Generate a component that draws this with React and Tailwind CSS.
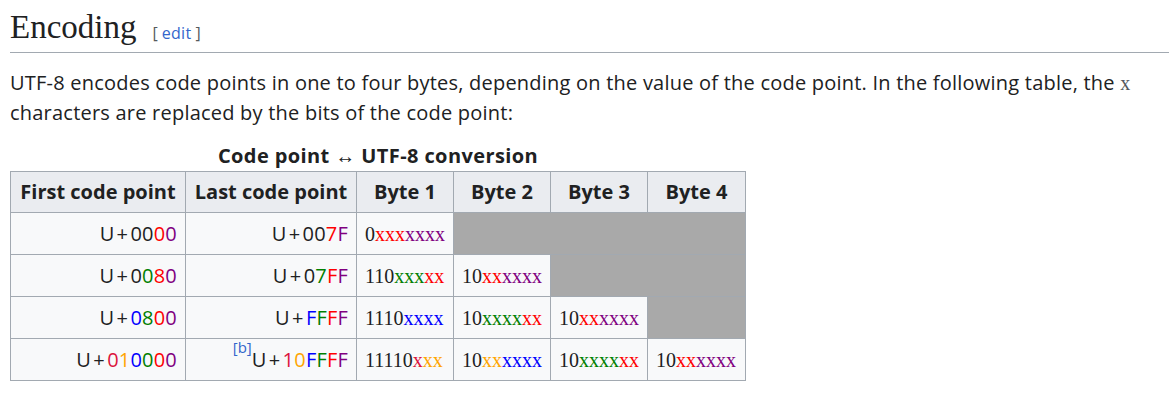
import React from 'react';

const C = {
  k: 'text-[#202122]',
  r: 'text-[#ff0000]',
  p: 'text-[#800080]',
  g: 'text-[#008000]',
  b: 'text-[#0000ff]',
  o: 'text-[#ffa500]',
  c: 'text-[#dc143c]',
};

// each cell is a list of [colorKey, text]
const rows = [
  {
    first: [['k', 'U+00'], ['r', '0'], ['p', '0']],
    last: [['k', 'U+00'], ['r', '7'], ['p', 'F']],
    bytes: [[['k', '0'], ['r', 'xxx'], ['p', 'xxxx']]],
  },
  {
    first: [['k', 'U+0'], ['g', '0'], ['r', '8'], ['p', '0']],
    last: [['k', 'U+0'], ['g', '7'], ['r', 'F'], ['p', 'F']],
    bytes: [
      [['k', '110'], ['g', 'xxx'], ['r', 'xx']],
      [['k', '10'], ['r', 'xx'], ['p', 'xxxx']],
    ],
  },
  {
    first: [['k', 'U+'], ['b', '0'], ['g', '8'], ['r', '0'], ['p', '0']],
    last: [['k', 'U+'], ['b', 'F'], ['g', 'F'], ['r', 'F'], ['p', 'F']],
    bytes: [
      [['k', '1110'], ['b', 'xxxx']],
      [['k', '10'], ['g', 'xxxx'], ['r', 'xx']],
      [['k', '10'], ['r', 'xx'], ['p', 'xxxx']],
    ],
  },
  {
    first: [['k', 'U+'], ['c', '0'], ['o', '1'], ['b', '0'], ['g', '0'], ['r', '0'], ['p', '0']],
    last: [['k', 'U+'], ['c', '1'], ['o', '0'], ['b', 'F'], ['g', 'F'], ['r', 'F'], ['p', 'F']],
    note: true,
    bytes: [
      [['k', '11110'], ['c', 'x'], ['o', 'xx']],
      [['k', '10'], ['o', 'xx'], ['b', 'xxxx']],
      [['k', '10'], ['g', 'xxxx'], ['r', 'xx']],
      [['k', '10'], ['r', 'xx'], ['p', 'xxxx']],
    ],
  },
];

const Parts = ({ parts }) =>
  parts.map(([key, text], i) => (
    <span key={i} className={C[key]}>
      {text.replace('U+', 'U\u200a+\u200a')}
    </span>
  ));

const cell = 'border border-[#a2a9b1] px-[8px] h-[42px] whitespace-nowrap';
const head = 'border border-[#a2a9b1] px-[6px] font-bold whitespace-nowrap tracking-normal';

export default function App() {
  return (
    <div className="bg-white w-[1169px] h-[394px] overflow-hidden pl-[10px] text-[#202122] font-['Open_Sans',sans-serif]">
      <div className="flex items-end border-b border-[#a2a9b1] h-[53px] pb-[8px]">
        <h2 className="font-['Liberation_Serif',serif] text-[33px] leading-none">Encoding</h2>
        <span className="ml-[16px] mb-[3px] text-[16px] leading-none text-[#54595d]">
          [<span className="text-[#3366cc] px-[4px] tracking-[0.3px]">edit</span>]
        </span>
      </div>

      <p className="text-[20px] leading-[30px] mt-[15px] tracking-[0.22px]">
        UTF-8 encodes code points in one to four bytes, depending on the value of the code point. In the following table,
        the <span className="font-['Liberation_Serif',serif] text-[#54595d]">x</span>
        <br />
        characters are replaced by the bits of the code point:
      </p>

      <table className="mt-[12px] border-collapse text-[20px] tracking-[0.2px]">
        <caption className="font-bold text-[20px] leading-[31px] tracking-[0.4px]">Code point ↔ UTF-8 conversion</caption>
        <thead>
          <tr className="bg-[#eaecf0] h-[41px]">
            <th className={`${head} w-[175px]`}>First code point</th>
            <th className={`${head} w-[171px]`}>Last code point</th>
            <th className={`${head} w-[97px]`}>Byte 1</th>
            <th className={`${head} w-[97px]`}>Byte 2</th>
            <th className={`${head} w-[97px]`}>Byte 3</th>
            <th className={`${head} w-[98px]`}>Byte 4</th>
          </tr>
        </thead>
        <tbody>
          {rows.map((row, i) => (
            <tr key={i} className="bg-[#f8f9fa]">
              <td className={`${cell} text-right`}>
                <Parts parts={row.first} />
              </td>
              <td className={`${cell} text-right`}>
                {row.note && (
                  <sup className="text-[#3366cc] text-[15px] align-[6px] tracking-normal">[b]</sup>
                )}
                <Parts parts={row.last} />
              </td>
              {row.bytes.map((b, j) => (
                <td key={j} className={`${cell} font-['Liberation_Serif',serif] text-[20px] tracking-normal`}>
                  <Parts parts={b} />
                </td>
              ))}
              {row.bytes.length < 4 && (
                <td colSpan={4 - row.bytes.length} className={`${cell} bg-[#a9a9a9]`} />
              )}
            </tr>
          ))}
        </tbody>
      </table>
    </div>
  );
}
